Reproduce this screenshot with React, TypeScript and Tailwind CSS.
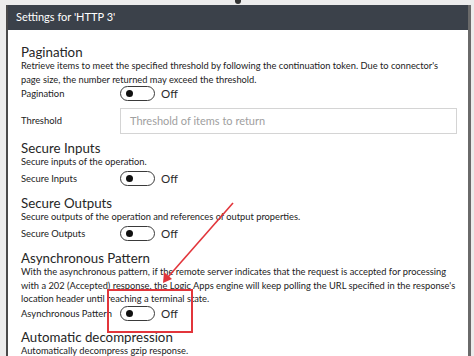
import React from 'react';

const font = { fontFamily: 'Lato, "Open Sans", sans-serif' };

function Toggle() {
  return (
    <div className="flex items-center">
      <div className="w-[35px] h-[15px] rounded-full border border-[#3a3a3a] bg-white flex items-center">
        <div className="w-[7px] h-[7px] rounded-full bg-[#111] ml-[5px]" />
      </div>
      <span className="ml-[6px] text-[11.5px] leading-[15px] text-[#2a2a2a]">Off</span>
    </div>
  );
}

function ToggleRow({ label, className = '' }: { label: string; className?: string }) {
  return (
    <div className={`flex items-center h-[15px] ${className}`}>
      <span className="w-[99px] text-[9.4px] leading-[15px] text-[#222] whitespace-nowrap">{label}</span>
      <Toggle />
    </div>
  );
}

function Heading({ children, className = '' }: { children: React.ReactNode; className?: string }) {
  return <h2 className={`text-[13.3px] leading-[14px] text-[#262626] ${className}`}>{children}</h2>;
}

function Desc({ lines }: { lines: string[] }) {
  return (
    <div className="text-[9.3px] leading-[13.5px] text-[#222] whitespace-nowrap">
      {lines.map((l) => (
        <p key={l}>{l}</p>
      ))}
    </div>
  );
}

export default function App() {
  return (
    <div className="relative w-[474px] h-[356px] overflow-hidden bg-[#ececec] pt-[5px] pl-[6px] pr-[3px]" style={font}>
      <div className="h-[351px] bg-white border-l-2 border-r-[3px] border-l-[#4a4a4a] border-r-[#6a6a6a] flex flex-col">
        <div className="h-[25px] shrink-0 bg-[#3b414a] flex items-center pl-[8px]">
          <span className="text-[11px] text-white">Settings for 'HTTP 3'</span>
        </div>

        <div className="pl-[13px] pr-[11px] pt-[15px]">
          <Heading>Pagination</Heading>
          <Desc
            lines={[
              "Retrieve items to meet the specified threshold by following the continuation token. Due to connector's",
              'page size, the number returned may exceed the threshold.',
            ]}
          />
          <ToggleRow label="Pagination" />

          <div className="flex items-center h-[26px] mt-[7px]">
            <span className="w-[99px] text-[9.4px] text-[#222]">Threshold</span>
            <div className="flex-1 h-full border border-[#d4d4d4] flex items-center px-[9px] text-[11px] text-[#a0a0a0]">
              Threshold of items to return
            </div>
          </div>

          <Heading className="mt-[7px]">Secure Inputs</Heading>
          <Desc lines={['Secure inputs of the operation.']} />
          <ToggleRow label="Secure Inputs" className="mt-[2px]" />

          <Heading className="mt-[10px]">Secure Outputs</Heading>
          <Desc lines={['Secure outputs of the operation and references of output properties.']} />
          <ToggleRow label="Secure Outputs" className="mt-[3px]" />

          <Heading className="mt-[10px]">Asynchronous Pattern</Heading>
          <Desc
            lines={[
              'With the asynchronous pattern, if the remote server indicates that the request is accepted for processing',
              "with a 202 (Accepted) response, the Logic Apps engine will keep polling the URL specified in the response's",
              'location header until reaching a terminal state.',
            ]}
          />
          <ToggleRow label="Asynchronous Pattern" />

          <Heading className="mt-[9px]">Automatic decompression</Heading>
          <Desc lines={['Automatically decompress gzip response.']} />
        </div>
      </div>

      {/* connector nub at the top */}
      <div className="absolute left-[235px] top-0 w-[6px] h-[4px] rounded-b-full bg-[#333]" />

      {/* annotation: red box + arrow */}
      <div className="absolute left-[107px] top-[289px] w-[86px] h-[44px] border-2 border-[#e2353b]" />
      <svg className="absolute left-0 top-0" width="474" height="356" viewBox="0 0 474 356">
        <line x1="233" y1="203" x2="168" y2="277" stroke="#e2353b" strokeWidth="1.6" />
        <polygon points="163,283 164,272 172,279" fill="#e2353b" />
      </svg>
    </div>
  );
}
